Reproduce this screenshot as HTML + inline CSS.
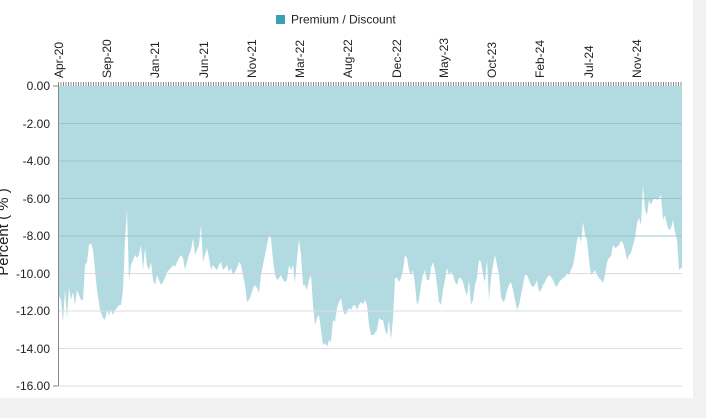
<!DOCTYPE html>
<html><head><meta charset="utf-8"><style>
html,body{margin:0;padding:0;background:#f2f2f2;width:706px;height:418px;overflow:hidden}
svg{display:block;font-family:"Liberation Sans",Arial,sans-serif}
</style></head><body>
<svg width="706" height="418" viewBox="0 0 706 418">
<defs><pattern id="tk" x="58" y="0" width="2.5" height="10" patternUnits="userSpaceOnUse"><rect x="0" y="0" width="1" height="10" fill="#888"/></pattern></defs>
<rect x="0" y="0" width="693" height="398" fill="#fff"/>
<rect x="276" y="15" width="9" height="9" fill="#3aa0b4"/>
<text x="291" y="23.5" font-size="12" fill="#222">Premium / Discount</text>
<g font-size="12" fill="#222">
<text transform="translate(63,78) rotate(-90)">Apr-20</text>
<text transform="translate(111,78) rotate(-90)">Sep-20</text>
<text transform="translate(159,78) rotate(-90)">Jan-21</text>
<text transform="translate(208,78) rotate(-90)">Jun-21</text>
<text transform="translate(256,78) rotate(-90)">Nov-21</text>
<text transform="translate(304,78) rotate(-90)">Mar-22</text>
<text transform="translate(352,78) rotate(-90)">Aug-22</text>
<text transform="translate(401,78) rotate(-90)">Dec-22</text>
<text transform="translate(448,78) rotate(-90)">May-23</text>
<text transform="translate(496,78) rotate(-90)">Oct-23</text>
<text transform="translate(544,78) rotate(-90)">Feb-24</text>
<text transform="translate(593,78) rotate(-90)">Jul-24</text>
<text transform="translate(641,78) rotate(-90)">Nov-24</text>
</g>
<rect x="58" y="82" width="624" height="4" fill="url(#tk)"/>
<path fill="#b2dbe1" d="M58,86 L682,86 L682,268 L681,268 L679,270 L677,240 L675,232 L673,220 L671,228 L669,230 L667,225 L665,215 L663,220 L661,195 L659,198 L657,200 L655,198 L653,200 L651,205 L649,200 L647,215 L645,210 L643,185 L641,225 L639,218 L637,223 L635,238 L633,245 L631,253 L629,255 L627,260 L625,250 L623,243 L621,241 L619,245 L617,247 L615,248 L613,245 L611,256 L609,258 L607,262 L605,275 L603,283 L601,280 L599,278 L597,275 L595,270 L593,273 L591,275 L589,260 L587,240 L585,235 L583,222 L581,242 L579,235 L577,240 L575,255 L573,265 L571,270 L569,275 L567,273 L565,277 L563,278 L561,280 L559,282 L557,287 L555,285 L553,280 L551,277 L549,275 L547,278 L545,282 L543,285 L541,290 L539,292 L537,280 L535,285 L533,287 L531,285 L529,280 L527,275 L525,275 L523,285 L521,295 L519,305 L517,310 L515,300 L513,290 L511,282 L509,285 L507,290 L505,300 L503,302 L501,297 L499,275 L497,265 L495,255 L493,265 L491,278 L489,300 L487,260 L485,282 L483,275 L481,262 L479,260 L477,278 L475,285 L473,300 L471,305 L469,280 L467,296 L465,290 L463,282 L461,278 L459,278 L457,285 L455,282 L453,275 L451,272 L449,275 L447,268 L445,280 L443,290 L441,305 L439,302 L437,285 L435,270 L433,262 L431,268 L429,280 L427,280 L425,270 L423,275 L421,285 L419,300 L417,305 L415,285 L413,270 L411,275 L409,270 L407,258 L405,255 L403,270 L401,278 L399,282 L397,278 L395,278 L393,318 L391,340 L389,320 L387,335 L385,330 L383,320 L381,320 L379,318 L377,330 L375,333 L373,335 L371,335 L369,325 L367,305 L365,300 L363,304 L361,302 L359,305 L357,310 L355,305 L353,306 L351,310 L349,308 L347,312 L345,315 L343,310 L341,298 L339,302 L337,308 L335,322 L333,320 L331,342 L329,340 L327,347 L325,343 L323,345 L321,330 L319,315 L317,318 L315,325 L313,305 L311,275 L309,280 L307,290 L305,285 L303,285 L301,255 L299,240 L297,258 L295,283 L293,265 L291,270 L289,265 L287,280 L285,282 L283,280 L281,275 L279,278 L277,280 L275,275 L273,260 L271,238 L269,235 L267,245 L265,255 L263,265 L261,275 L259,293 L257,288 L255,285 L253,288 L251,295 L249,300 L247,302 L245,285 L243,275 L241,265 L239,262 L237,268 L235,272 L233,275 L231,268 L229,272 L227,265 L225,268 L223,270 L221,262 L219,265 L217,270 L215,268 L213,265 L211,270 L209,258 L207,248 L205,255 L203,262 L201,225 L199,245 L197,250 L195,255 L193,238 L191,250 L189,255 L187,262 L185,270 L183,258 L181,255 L179,258 L177,262 L175,267 L173,265 L171,268 L169,270 L167,272 L165,278 L163,282 L161,285 L159,280 L157,275 L155,285 L153,280 L151,262 L149,270 L147,265 L145,248 L143,270 L141,245 L139,255 L137,258 L135,255 L133,260 L131,265 L129,280 L127,210 L125,240 L123,290 L121,305 L119,305 L117,308 L115,310 L113,315 L111,310 L109,315 L107,310 L105,320 L103,318 L100,310 L97,290 L95,270 L93,250 L91,243 L89,245 L87,262 L85,265 L83,300 L81,300 L79,295 L77,290 L75,305 L73,292 L71,300 L69,288 L67,318 L65,290 L63,322 L61,300 L59,296 L58,296 Z"/>
<g stroke-width="1">
<line x1="58" y1="123.5" x2="682" y2="123.5" stroke="#9cc4c9"/>
<line x1="58" y1="161" x2="682" y2="161" stroke="#9cc4c9"/>
<line x1="58" y1="198.5" x2="682" y2="198.5" stroke="#9cc4c9"/>
<line x1="58" y1="236" x2="682" y2="236" stroke="#9cc4c9"/>
<line x1="58" y1="273.5" x2="682" y2="273.5" stroke="#ccd" stroke-opacity=".7"/>
<line x1="58" y1="311" x2="682" y2="311" stroke="#ddd"/>
<line x1="58" y1="348.5" x2="682" y2="348.5" stroke="#ddd"/>
<line x1="58" y1="386" x2="682" y2="386" stroke="#ddd"/>
<line x1="58.5" y1="86" x2="58.5" y2="386" stroke="#888"/>
</g>
<g font-size="12" fill="#222" text-anchor="end">
<text x="50" y="90">0.00</text>
<text x="50" y="128">-2.00</text>
<text x="50" y="165">-4.00</text>
<text x="50" y="203">-6.00</text>
<text x="50" y="240">-8.00</text>
<text x="50" y="278">-10.00</text>
<text x="50" y="315">-12.00</text>
<text x="50" y="353">-14.00</text>
<text x="50" y="390">-16.00</text>
</g>
<g stroke="#888"><line x1="53" y1="86" x2="58" y2="86"/><line x1="53" y1="386" x2="58" y2="386"/></g>
<text transform="translate(8,232) rotate(-90)" font-size="15" fill="#222" text-anchor="middle">Percent ( % )</text>
</svg>
</body></html>
